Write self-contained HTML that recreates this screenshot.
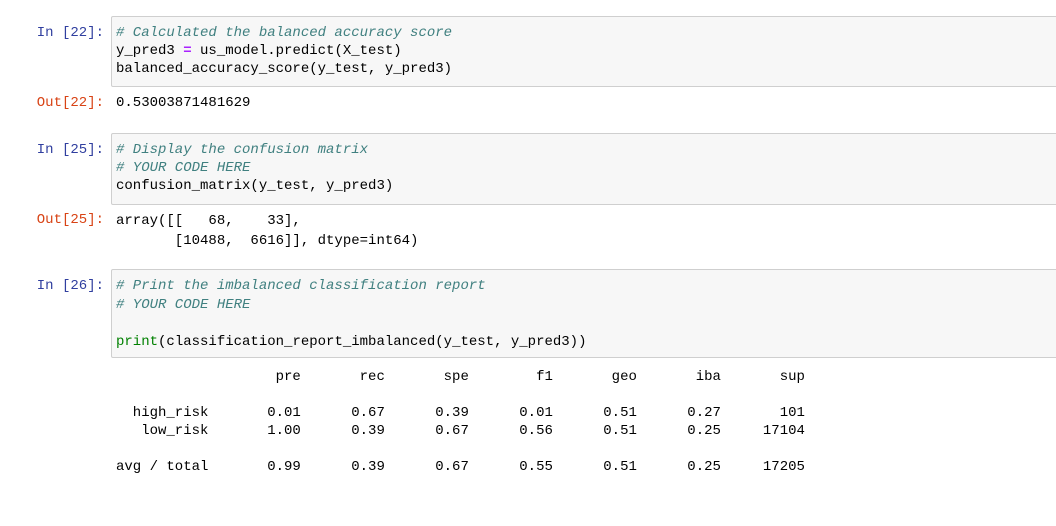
<!DOCTYPE html>
<html><head><style>
body{margin:0;width:1056px;height:526px;background:#fff;overflow:hidden;position:relative;font-family:"Liberation Mono",monospace;font-size:14px;}
pre{margin:0;font-family:"Liberation Mono",monospace;font-size:14px;line-height:18px;position:absolute;color:#000;}
.p{position:absolute;width:104px;text-align:right;line-height:18px;font-size:14px;}
.in{color:#303F9F}.out{color:#D84315}
.box{position:absolute;left:111px;width:950px;background:#f7f7f7;border:1px solid #cfcfcf;border-radius:2px;box-sizing:border-box;}
.c{color:#408080;font-style:italic}.o{color:#AA22FF;font-weight:bold}.k{color:#008000}
</style></head><body>
<div class="box" style="top:16px;height:71px"></div>
<div class="p in" style="top:24px">In [22]:</div>
<pre style="left:116px;top:24px"><span class="c"># Calculated the balanced accuracy score</span>
y_pred3 <span class="o">=</span> us_model.predict(X_test)
balanced_accuracy_score(y_test, y_pred3)</pre>
<div class="p out" style="top:94px">Out[22]:</div>
<pre style="left:116px;top:94px">0.53003871481629</pre>

<div class="box" style="top:133px;height:72px"></div>
<div class="p in" style="top:141px">In [25]:</div>
<pre style="left:116px;top:141px"><span class="c"># Display the confusion matrix</span>
<span class="c"># YOUR CODE HERE</span>
confusion_matrix(y_test, y_pred3)</pre>
<div class="p out" style="top:211px">Out[25]:</div>
<pre style="left:116px;top:211px;line-height:20px">array([[   68,    33],
       [10488,  6616]], dtype=int64)</pre>

<div class="box" style="top:269px;height:89px"></div>
<div class="p in" style="top:277px">In [26]:</div>
<pre style="left:116px;top:277px;line-height:18.5px"><span class="c"># Print the imbalanced classification report</span>
<span class="c"># YOUR CODE HERE</span>

<span class="k">print</span>(classification_report_imbalanced(y_test, y_pred3))</pre>
<pre style="left:116px;top:368px">                   pre       rec       spe        f1       geo       iba       sup

  high_risk       0.01      0.67      0.39      0.01      0.51      0.27       101
   low_risk       1.00      0.39      0.67      0.56      0.51      0.25     17104

avg / total       0.99      0.39      0.67      0.55      0.51      0.25     17205</pre>
</body></html>
